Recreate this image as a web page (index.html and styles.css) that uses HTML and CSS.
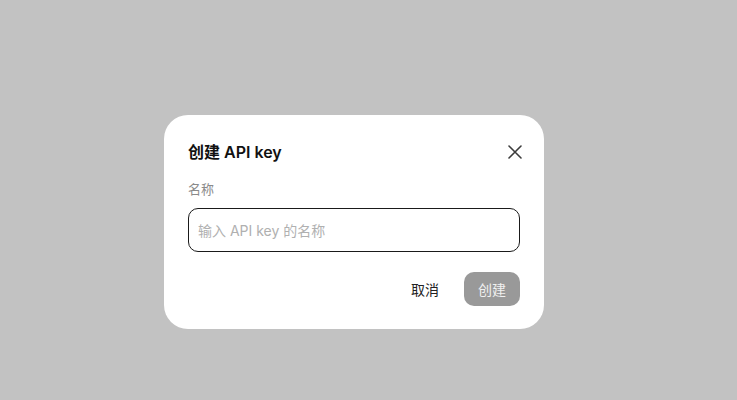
FILE: index.html
```html
<!DOCTYPE html>
<html lang="zh">
<head>
<meta charset="utf-8">
<link rel="stylesheet" href="styles.css">
</head>
<body>
<div class="overlay">
  <div class="dialog">
    <div class="header">
      <h2 class="title">创建 API key</h2>
      <button class="close" aria-label="关闭">
        <svg width="16" height="16" viewBox="0 0 16 16"><path d="M2 2L14 14M14 2L2 14" stroke="#3c3c3c" stroke-width="1.6" stroke-linecap="round" fill="none"/></svg>
      </button>
    </div>
    <label class="label">名称</label>
    <input class="input" type="text" placeholder="输入 API key 的名称">
    <div class="actions">
      <button class="btn btn-cancel">取消</button>
      <button class="btn btn-create">创建</button>
    </div>
  </div>
</div>
</body>
</html>
```

FILE: styles.css
```css
* { box-sizing: border-box; }
html, body { margin: 0; height: 100%; }
body {
  background: #c2c2c2;
  font-family: Inter, "Noto Sans CJK SC", "Noto Sans", sans-serif;
  color: #111;
}
.overlay {
  padding: 115px 0 0 164px;
}
.dialog {
  width: 380px;
  background: #fff;
  border-radius: 24px;
  padding: 25px 24px 23px 24px;
  display: flex;
  flex-direction: column;
}
.header {
  display: flex;
  align-items: center;
  justify-content: space-between;
  height: 24px;
}
.title {
  margin: 0;
  font-size: 16px;
  font-weight: 600;
  line-height: 24px;
  color: #111;
}
.close {
  border: 0;
  background: none;
  padding: 0;
  width: 16px;
  height: 16px;
  margin-right: -3px;
  display: flex;
}
.label {
  margin-top: 15px;
  font-size: 13px;
  line-height: 20px;
  color: #8a8a8a;
}
.input {
  margin-top: 9px;
  height: 44px;
  width: 100%;
  border: 1px solid #1a1a1a;
  border-radius: 10px;
  padding: 0 9px;
  font-family: inherit;
  font-size: 14px;
  color: #111;
  outline: none;
}
.input::placeholder { color: #b0b0b0; }
.actions {
  margin-top: 20px;
  display: flex;
  justify-content: flex-end;
  gap: 15px;
}
.btn {
  border: 0;
  height: 34px;
  border-radius: 10px;
  font-family: inherit;
  font-size: 14px;
  padding: 0 14px;
}
.btn-cancel {
  background: none;
  color: #222;
  padding: 0 12px 0 13px;
  margin-right: -2px;
}
.btn-create {
  background: #999999;
  color: #f0f0f0;
  width: 56px;
}
```
